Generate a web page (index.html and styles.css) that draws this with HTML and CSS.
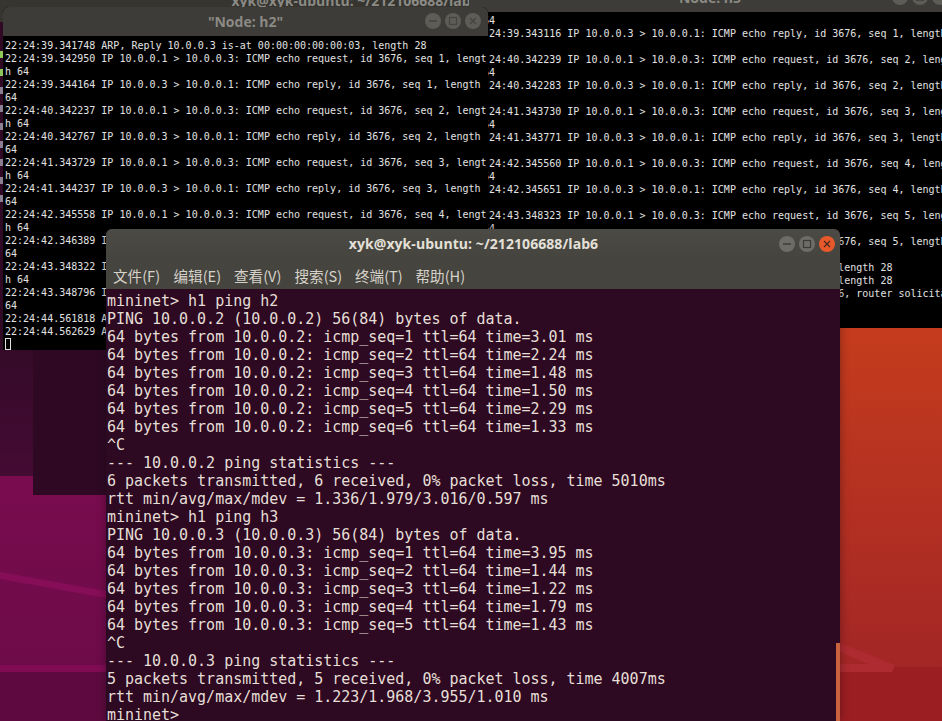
FILE: index.html
```html
<!DOCTYPE html>
<html lang="zh">
<head>
<meta charset="utf-8">
<title>Mininet ping</title>
<link rel="stylesheet" href="styles.css">
</head>
<body>
<main class="desktop">
  <svg class="wallpaper" viewBox="0 0 942 721" width="942" height="721" aria-hidden="true">
    <defs>
      <linearGradient id="left" x1="0" y1="0" x2="0" y2="1"><stop offset="0" stop-color="#820c52"/><stop offset="1" stop-color="#6a0b47"/></linearGradient>
      <linearGradient id="right" x1="0" y1="0" x2="0" y2="1"><stop offset="0" stop-color="#c53c1d"/><stop offset="1" stop-color="#a32626"/></linearGradient>
    </defs>
    <rect x="0" y="328" width="480" height="393" fill="url(#left)"/>
    <rect x="840" y="328" width="102" height="339" fill="url(#right)"/>
    <rect x="840" y="667" width="102" height="54" fill="#9b1e22"/>
    <path d="M840 643 L895 665 L892 672 L840 672 L840 664 L868 664 L840 652 Z" fill="#ad2b31"/>
    <path d="M0 572 L106 591 L106 598 L0 579 Z" fill="#860d57"/>
    <rect x="0" y="665" width="106" height="7" fill="#810c54"/>
    <rect x="0" y="672" width="106" height="49" fill="#5e0a40"/>
  </svg>

  <div class="ghost ghost-wide"></div>
  <div class="ghost ghost-narrow"></div>

  <section class="window window-back">
    <header class="titlebar titlebar-back"><span class="title-dim">xyk@xyk-ubuntu: ~/212106688/lab6</span></header>
    <div class="edge-marks">
      <i class="mark mark-green"></i>
      <i class="mark mark-green"></i>
      <i class="mark mark-pale"></i>
      <i class="mark mark-pale"></i>
      <i class="mark mark-pale"></i>
      <i class="mark mark-pale"></i>
      <i class="mark mark-pale"></i>
      <i class="mark mark-pale"></i>
      <i class="mark mark-pale"></i>
    </div>
  </section>

  <section class="window xterm-h3">
    <header class="titlebar titlebar-dim titlebar-h3">
      <span class="title-dim">"Node: h3"</span>
      <span class="btns">
        <i class="btn btn-dim"><svg viewBox="0 0 16 16" width="16" height="16"><path d="M4 8h8" stroke="#45443f" stroke-width="1.4"/></svg></i>
        <i class="btn btn-dim"><svg viewBox="0 0 16 16" width="16" height="16"><rect x="4.5" y="4.5" width="7" height="7" fill="none" stroke="#45443f" stroke-width="1.2"/></svg></i>
        <i class="btn btn-dim"><svg viewBox="0 0 16 16" width="16" height="16"><path d="M5 5l6 6M11 5l-6 6" stroke="#45443f" stroke-width="1.3"/></svg></i>
      </span>
    </header>
    <pre class="xterm xterm-tight">h 64
22:24:39.343116 IP 10.0.0.3 &gt; 10.0.0.1: ICMP echo reply, id 3676, seq 1, length 64
64
22:24:40.342239 IP 10.0.0.1 &gt; 10.0.0.3: ICMP echo request, id 3676, seq 2, length 64
h 64
22:24:40.342283 IP 10.0.0.3 &gt; 10.0.0.1: ICMP echo reply, id 3676, seq 2, length 64
64
22:24:41.343730 IP 10.0.0.1 &gt; 10.0.0.3: ICMP echo request, id 3676, seq 3, length 64
h 64
22:24:41.343771 IP 10.0.0.3 &gt; 10.0.0.1: ICMP echo reply, id 3676, seq 3, length 64
64
22:24:42.345560 IP 10.0.0.1 &gt; 10.0.0.3: ICMP echo request, id 3676, seq 4, length 64
h 64
22:24:42.345651 IP 10.0.0.3 &gt; 10.0.0.1: ICMP echo reply, id 3676, seq 4, length 64
64
22:24:43.348323 IP 10.0.0.1 &gt; 10.0.0.3: ICMP echo request, id 3676, seq 5, length 64
h 64
22:24:43.348356 IP 10.0.0.3 &gt; 10.0.0.1: ICMP echo reply, id 3676, seq 5, length 64
64
22:24:44.561640 ARP, Request who-has 10.0.0.1 tell 10.0.0.3, length 28
22:24:44.561818 ARP, Reply 10.0.0.1 is-at 00:00:00:00:00:01, length 28
22:24:46.913204 IP6 fe80::f8a1:42ff:fe3c:91d2 &gt; ff02::2: ICMP6, router solicitation, length 16</pre>
  </section>

  <section class="window xterm-h2">
    <header class="titlebar titlebar-dim">
      <span class="title-dim">"Node: h2"</span>
      <span class="btns">
        <i class="btn btn-dim"><svg viewBox="0 0 16 16" width="16" height="16"><path d="M4 8h8" stroke="#45443f" stroke-width="1.4"/></svg></i>
        <i class="btn btn-dim"><svg viewBox="0 0 16 16" width="16" height="16"><rect x="4.5" y="4.5" width="7" height="7" fill="none" stroke="#45443f" stroke-width="1.2"/></svg></i>
        <i class="btn btn-dim"><svg viewBox="0 0 16 16" width="16" height="16"><path d="M5 5l6 6M11 5l-6 6" stroke="#45443f" stroke-width="1.3"/></svg></i>
      </span>
    </header>
    <pre class="xterm">22:24:39.341748 ARP, Reply 10.0.0.3 is-at 00:00:00:00:00:03, length 28
22:24:39.342950 IP 10.0.0.1 &gt; 10.0.0.3: ICMP echo request, id 3676, seq 1, lengt
h 64
22:24:39.344164 IP 10.0.0.3 &gt; 10.0.0.1: ICMP echo reply, id 3676, seq 1, length
64
22:24:40.342237 IP 10.0.0.1 &gt; 10.0.0.3: ICMP echo request, id 3676, seq 2, lengt
h 64
22:24:40.342767 IP 10.0.0.3 &gt; 10.0.0.1: ICMP echo reply, id 3676, seq 2, length
64
22:24:41.343729 IP 10.0.0.1 &gt; 10.0.0.3: ICMP echo request, id 3676, seq 3, lengt
h 64
22:24:41.344237 IP 10.0.0.3 &gt; 10.0.0.1: ICMP echo reply, id 3676, seq 3, length
64
22:24:42.345558 IP 10.0.0.1 &gt; 10.0.0.3: ICMP echo request, id 3676, seq 4, lengt
h 64
22:24:42.346389 IP 10.0.0.3 &gt; 10.0.0.1: ICMP echo reply, id 3676, seq 4, length
64
22:24:43.348322 IP 10.0.0.1 &gt; 10.0.0.3: ICMP echo request, id 3676, seq 5, lengt
h 64
22:24:43.348796 IP 10.0.0.3 &gt; 10.0.0.1: ICMP echo reply, id 3676, seq 5, length
64
22:24:44.561818 ARP, Request who-has 10.0.0.1 tell 10.0.0.3, length 28
22:24:44.562629 ARP, Reply 10.0.0.1 is-at 00:00:00:00:00:01, length 28
<span class="cursor"></span></pre>
  </section>

  <section class="window terminal">
    <header class="titlebar titlebar-main">
      <span class="title-main">xyk@xyk-ubuntu: ~/212106688/lab6</span>
      <span class="btns btns-main">
        <i class="btn btn-main"><svg viewBox="0 0 16 16" width="16" height="16"><path d="M4 8h8" stroke="#3c3b37" stroke-width="1.4"/></svg></i>
        <i class="btn btn-main"><svg viewBox="0 0 16 16" width="16" height="16"><rect x="4.5" y="4.5" width="7" height="7" fill="none" stroke="#3c3b37" stroke-width="1.2"/></svg></i>
        <i class="btn btn-close"><svg viewBox="0 0 16 16" width="16" height="16"><path d="M5 5l6 6M11 5l-6 6" stroke="#4a2a1c" stroke-width="1.3"/></svg></i>
      </span>
    </header>
    <nav class="menubar">
      <span class="menu-item">文件(F)</span>
      <span class="menu-item">编辑(E)</span>
      <span class="menu-item">查看(V)</span>
      <span class="menu-item">搜索(S)</span>
      <span class="menu-item">终端(T)</span>
      <span class="menu-item">帮助(H)</span>
    </nav>
    <pre class="console">mininet&gt; h1 ping h2
PING 10.0.0.2 (10.0.0.2) 56(84) bytes of data.
64 bytes from 10.0.0.2: icmp_seq=1 ttl=64 time=3.01 ms
64 bytes from 10.0.0.2: icmp_seq=2 ttl=64 time=2.24 ms
64 bytes from 10.0.0.2: icmp_seq=3 ttl=64 time=1.48 ms
64 bytes from 10.0.0.2: icmp_seq=4 ttl=64 time=1.50 ms
64 bytes from 10.0.0.2: icmp_seq=5 ttl=64 time=2.29 ms
64 bytes from 10.0.0.2: icmp_seq=6 ttl=64 time=1.33 ms
^C
--- 10.0.0.2 ping statistics ---
6 packets transmitted, 6 received, 0% packet loss, time 5010ms
rtt min/avg/max/mdev = 1.336/1.979/3.016/0.597 ms
mininet&gt; h1 ping h3
PING 10.0.0.3 (10.0.0.3) 56(84) bytes of data.
64 bytes from 10.0.0.3: icmp_seq=1 ttl=64 time=3.95 ms
64 bytes from 10.0.0.3: icmp_seq=2 ttl=64 time=1.44 ms
64 bytes from 10.0.0.3: icmp_seq=3 ttl=64 time=1.22 ms
64 bytes from 10.0.0.3: icmp_seq=4 ttl=64 time=1.79 ms
64 bytes from 10.0.0.3: icmp_seq=5 ttl=64 time=1.43 ms
^C
--- 10.0.0.3 ping statistics ---
5 packets transmitted, 5 received, 0% packet loss, time 4007ms
rtt min/avg/max/mdev = 1.223/1.968/3.955/1.010 ms
mininet&gt; </pre>
  </section>
  <div class="edge-bar"></div>
</main>
</body>
</html>
```

FILE: styles.css
```css
* { box-sizing: border-box; }
html, body { margin: 0; padding: 0; background: #3a0a2c; }
.desktop { position: relative; width: 942px; height: 721px; overflow: hidden; background: #3a0a2c; }
.wallpaper { position: absolute; left: 0; top: 0; display: block; }

.ghost { position: absolute; }
.ghost-wide { left: 0; top: 340px; width: 110px; height: 136px; background: linear-gradient(#340a28, #440b33); }
.ghost-narrow { left: 33px; top: 340px; width: 77px; height: 155px; background: #2f0924; }

.window { position: absolute; overflow: hidden; border-radius: 6px 6px 0 0; }
.window-back { left: 0; top: -28px; width: 710px; height: 378px; background: #300a24; }
.xterm-h3 { left: 469px; top: -17px; width: 486px; height: 345px; background: #000; }
.xterm-h2 { left: 3px; top: 7px; width: 485px; height: 343px; background: #000; }
.terminal { left: 106px; top: 229px; width: 734px; height: 492px; background: #2d0922; display: flex; flex-direction: column; box-shadow: 0 0 10px rgba(0, 0, 0, .35); }
.edge-bar { position: absolute; left: 836px; top: 643px; width: 4px; height: 78px; background: #c8623f; }

.edge-marks { display: flex; flex-direction: column; gap: 11px; padding: 29px 0 0 0; width: 3px; }
.mark { display: block; width: 3px; height: 7px; }
.mark-green { background: #8fc85a; }
.mark-pale { background: #8d7f92; }

.titlebar { position: relative; display: flex; align-items: center; justify-content: center; flex: none; }
.titlebar-dim { height: 29px; background: #3d3c38; }
.titlebar-h3 { padding-right: 4px; }
.titlebar-back { height: 50px; padding-top: 6px; background: #363530; }
.titlebar-main { height: 30px; background: linear-gradient(#4b4a45, #45443f); }
.title-dim { font: bold 14px "Open Sans", "Liberation Sans", sans-serif; color: #8b8a85; }
.title-main { font: bold 14px "Open Sans", "Liberation Sans", sans-serif; letter-spacing: .07px; color: #e4e0d8; margin: -2px 0 0 1px; }

.btns { position: absolute; right: 7px; top: 6px; display: flex; gap: 4px; }
.btn { display: flex; align-items: center; justify-content: center; width: 16px; height: 16px; border-radius: 50%; }
.btn-dim { background: #5d5c57; }
.btns-main { right: 5px; top: 7px; }
.btn-main { background: #6d6c66; }
.btn-close { background: #e7592b; }

.menubar { display: flex; gap: 11px; height: 30px; flex: none; padding: 8px 0 0 7px; background: #45443f; }
.menu-item { font: 14.6px/17px "Noto Sans CJK SC", "Noto Sans", sans-serif; color: #d6d2c9; width: 49.5px; white-space: nowrap; }

.xterm { margin: 0; padding: 3px 0 0 2px; font: 10px/13px "DejaVu Sans Mono", monospace; color: #e2e2e2; white-space: pre; }
.xterm-tight { padding-top: 2px; }
.cursor { display: inline-block; width: 6px; height: 12px; border: 1px solid #e2e2e2; vertical-align: -2px; }

.console { margin: 0; padding: 3px 0 0 1px; font: 15px/18px "DejaVu Sans Mono", monospace; letter-spacing: -.02px; color: #e5dfd6; white-space: pre; }
```
